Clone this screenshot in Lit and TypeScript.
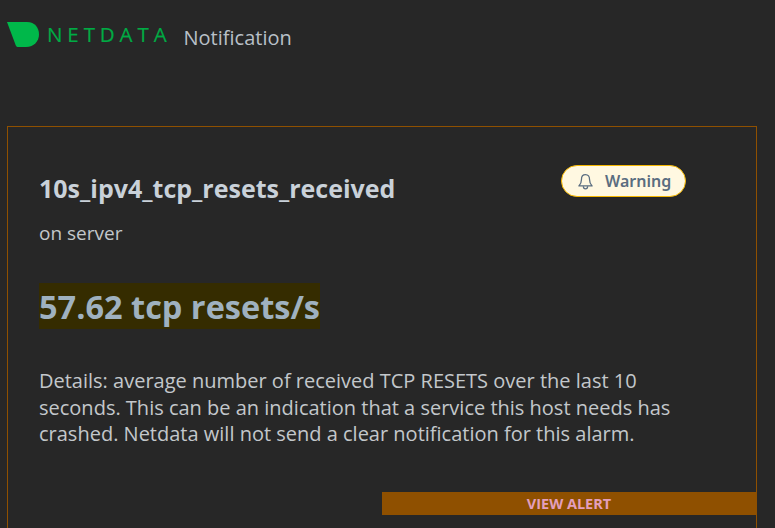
import { LitElement, html, css } from "lit";
import { customElement } from "lit/decorators.js";

@customElement("app-root")
export class AppRoot extends LitElement {
  static styles = css`
    :host { display: block; width: 775px; height: 528px; overflow: hidden; background: #272727; font-family: "Open Sans", sans-serif; color: #c9ced3; }
    .header { display: flex; align-items: flex-start; height: 126px; padding-left: 7px; box-sizing: border-box; }
    .logo { display: block; margin-top: 22px; }
    .brand { margin: 20px 0 0 7px; font-size: 20.5px; line-height: 28px; letter-spacing: 4.9px; color: #00ab44; font-weight: 400; -webkit-text-stroke: 0.2px #00ab44; }
    .title { margin: 24px 0 0 12px; font-size: 20px; line-height: 27px; color: #b9c0c8; }
    .card { margin: 0 18px 0 7px; border: 1px solid #8f5000; height: 420px; padding: 0 0 0 31px; box-sizing: border-box; position: relative; }
    .top { display: flex; justify-content: space-between; align-items: flex-start; padding-top: 38px; padding-right: 70px; }
    h1 { margin: 7px 0 0; font-size: 25px; line-height: 33px; font-weight: 700; color: #c9d1d9; }
    .badge { display: flex; align-items: center; gap: 11px; box-sizing: border-box; width: 125px; height: 32px; padding-left: 15px; background: #fff8e1; border: 1px solid #f5b700; border-radius: 16px; color: #5a6d80; font-size: 16px; font-weight: 600; font-family: "Noto Sans", sans-serif; }
    .server { margin: 15px 0 0; font-size: 19px; line-height: 26px; color: #c3c7cb; }
    .value { display: inline-block; margin: 37px 0 0; padding-top: 2px; background: #352c00; font-size: 32.5px; line-height: 44px; font-weight: 700; color: #9fb1bf; }
    .details { margin: 39px 0 0; font-size: 20px; line-height: 26.5px; width: 650px; color: #c3c7cb; }
    .cta { position: absolute; right: 0; top: 365px; width: 374px; height: 23px; background: #8f5000; color: #e39fbd; font-size: 14.5px; font-weight: 700; line-height: 23px; text-align: center; }
  `;
  render() {
    return html`
      <div class="header">
        <svg class="logo" width="33" height="25" viewBox="0 0 33 25">
          <path d="M0 0H20C28 0 32 6 32 12.500C32 19 27 25 19 25H11.500C10 25 9.300 24.500 8.700 23.200Z" fill="#00b84a"/>
        </svg>
        <div class="brand">NETDATA</div>
        <div class="title">Notification</div>
      </div>
      <div class="card">
        <div class="top">
          <h1>10s_ipv4_tcp_resets_received</h1>
          <div class="badge">
            <svg width="17" height="17" viewBox="0 0 16 16" fill="none" stroke="#5a6d80" stroke-width="1.200" stroke-linejoin="round">
              <path d="M8 1.500C5.500 1.500 4.200 3.500 4.200 6C4.200 9 3.400 10.500 1.800 12.200H14.200C12.600 10.500 11.800 9 11.800 6C11.800 3.500 10.500 1.500 8 1.500Z"/>
              <path d="M6 12.500C6 14 6.800 15 8 15C9.200 15 10 14 10 12.500"/>
            </svg>
            <span>Warning</span>
          </div>
        </div>
        <p class="server">on server</p>
        <div class="value">57.62 tcp resets/s</div>
        <p class="details">Details: average number of received TCP RESETS over the last 10 seconds. This can be an indication that a service this host needs has crashed. Netdata will not send a clear notification for this alarm.</p>
        <div class="cta">VIEW ALERT</div>
      </div>
    `;
  }
}
